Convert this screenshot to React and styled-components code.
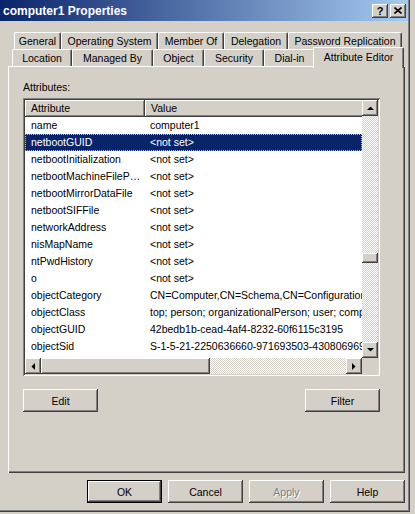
import React from "react"
import styled, { createGlobalStyle } from "styled-components"

const GlobalStyle = createGlobalStyle`
  * { box-sizing: border-box; }
  html, body { margin: 0; padding: 0; background: #d4d0c8; }
  body {
    font-family: "Liberation Sans", Arial, sans-serif;
    font-size: 10.5px;
    color: #000;
  }
`

const raised = `
  box-shadow: inset -1px -1px #404040, inset 1px 1px #fff, inset -2px -2px #808080, inset 2px 2px #d4d0c8;
`

const Window = styled.div`
  width: 410px;
  height: 512px;
  background: #d4d0c8;
  box-shadow: inset -1px -1px #404040, inset -2px -2px #808080;
  padding: 0 2px 2px 0;
  display: flex;
  flex-direction: column;
`

const TitleBar = styled.div`
  height: 21px;
  flex: none;
  background: linear-gradient(to right, #0a246a, #a6caf0);
  display: flex;
  align-items: center;
  padding: 0 2px 0 3px;
  color: #fff;
  font-weight: bold;
  font-size: 12px;
`

const Title = styled.span`
  flex: 1;
  white-space: nowrap;
`

const CaptionButton = styled.div`
  width: 16px;
  height: 14px;
  margin-left: 2px;
  background: #d4d0c8;
  ${raised}
  display: flex;
  align-items: center;
  justify-content: center;
  color: #000;
  font-size: 11px;
  font-weight: bold;
`

const Body = styled.div`
  flex: 1;
  padding: 11px 3px 0 8px;
  display: flex;
  flex-direction: column;
`

const TabStrip = styled.div`
  height: 34px;
  flex: none;
  position: relative;
  z-index: 1;
`

const TabRow = styled.div`
  display: flex;
  height: 17px;
  padding-left: ${p => p.$indent}px;
`

const Tab = styled.div`
  flex: none;
  width: ${p => (p.$active ? p.$w + 4 : p.$w)}px;
  height: ${p => (p.$active ? 21 : 17)}px;
  margin: ${p => (p.$active ? "-2px -2px 0" : "0")};
  background: #d4d0c8;
  border-top: 1px solid #fff;
  border-left: 1px solid #fff;
  border-right: 1px solid #404040;
  border-radius: 2px 2px 0 0;
  box-shadow: inset -1px 0 #808080;
  display: flex;
  align-items: center;
  justify-content: center;
  padding-bottom: ${p => (p.$active ? 3 : 1)}px;
  white-space: nowrap;
  position: relative;
  z-index: ${p => (p.$active ? 2 : 0)};
`

const Panel = styled.div`
  height: 407px;
  flex: none;
  background: #d4d0c8;
  box-shadow: inset 1px 1px #fff, inset -1px -1px #404040, inset -2px -2px #808080;
  padding: 15px 0 0 15px;
  display: flex;
  flex-direction: column;
`

const Label = styled.div`
  height: 13px;
  line-height: 13px;
`

const ListView = styled.div`
  width: 357px;
  height: 278px;
  margin-top: 4px;
  padding: 2px;
  background: #fff;
  box-shadow: inset 1px 1px #808080, inset -1px -1px #fff, inset 2px 2px #404040, inset -2px -2px #d4d0c8;
  display: grid;
  grid-template-columns: 337px 16px;
  grid-template-rows: 258px 16px;
`

const ListContent = styled.div`
  overflow: hidden;
  background: #fff;
`

const HeaderRow = styled.div`
  display: flex;
  height: 17px;
  background: #d4d0c8;
`

const HeaderCell = styled.div`
  flex: none;
  width: ${p => p.$w}px;
  padding-left: ${p => p.$pad}px;
  line-height: 16px;
  box-shadow: inset -1px -1px #404040, inset 1px 1px #fff, inset -2px -2px #808080;
  white-space: nowrap;
`

const Row = styled.div`
  display: flex;
  height: 17px;
  line-height: 17px;
  width: 100%;
  background: ${p => (p.$selected ? "#0a246a" : "transparent")};
  color: ${p => (p.$selected ? "#fff" : "#000")};
  outline: ${p => (p.$selected ? "1px dotted #c8c4a0" : "none")};
  outline-offset: -1px;
`

const NameCell = styled.div`
  flex: none;
  width: 120px;
  padding: 0 4px 0 6px;
  white-space: nowrap;
  overflow: hidden;
  text-overflow: ellipsis;
`

const ValueCell = styled.div`
  flex: none;
  padding-left: 5px;
  white-space: nowrap;
`

const track = `
  background-color: #fff;
  background-image: conic-gradient(#d4d0c8 25%, #fff 0 50%, #d4d0c8 0 75%, #fff 0);
  background-size: 2px 2px;
`

const VScroll = styled.div`
  display: flex;
  flex-direction: column;
`

const HScroll = styled.div`
  display: flex;
`

const ScrollButton = styled.div`
  flex: none;
  width: 16px;
  height: 16px;
  background: #d4d0c8;
  ${raised}
  display: flex;
  align-items: center;
  justify-content: center;
`

const Track = styled.div`
  flex: 1;
  display: flex;
  flex-direction: ${p => (p.$vertical ? "column" : "row")};
  ${track}
`

const Thumb = styled.div`
  flex: none;
  background: #d4d0c8;
  ${raised}
  width: ${p => (p.$vertical ? "16px" : `${p.$size}px`)};
  height: ${p => (p.$vertical ? `${p.$size}px` : "16px")};
  margin-top: ${p => (p.$vertical ? p.$offset : 0)}px;
  margin-left: ${p => (p.$vertical ? 0 : p.$offset)}px;
`

const Corner = styled.div`
  background: #d4d0c8;
`

const ActionRow = styled.div`
  width: 357px;
  margin-top: 13px;
  display: flex;
  justify-content: space-between;
`

const Button = styled.button`
  width: 75px;
  height: 23px;
  padding: 0;
  border: none;
  background: #d4d0c8;
  font-family: "Liberation Sans", Arial, sans-serif;
  font-size: 10.5px;
  color: ${p => (p.disabled ? "#808080" : "#000")};
  text-shadow: ${p => (p.disabled ? "1px 1px #fff" : "none")};
  box-shadow: ${p =>
    p.$default
      ? "inset 0 0 0 1px #000, inset -2px -2px #404040, inset 2px 2px #fff, inset -3px -3px #808080"
      : "inset -1px -1px #404040, inset 1px 1px #fff, inset -2px -2px #808080"};
`

const ButtonBar = styled.div`
  margin-top: 7px;
  display: flex;
  justify-content: flex-end;
  gap: 6px;
`

const Arrow = ({ dir }) => {
  const pts = {
    up: "0,4 7,4 3.5,0.5",
    down: "0,0 7,0 3.5,3.5",
    left: "4,0 4,7 0.5,3.5",
    right: "0,0 0,7 3.5,3.5",
  }[dir]
  const vertical = dir === "up" || dir === "down"
  return (
    <svg width={vertical ? 7 : 4} height={vertical ? 4 : 7} viewBox={vertical ? "0 0 7 4" : "0 0 4 7"}>
      <polygon points={pts} fill="#000" />
    </svg>
  )
}

const rows = [
  ["name", "computer1"],
  ["netbootGUID", "<not set>"],
  ["netbootInitialization", "<not set>"],
  ["netbootMachineFilePath", "<not set>"],
  ["netbootMirrorDataFile", "<not set>"],
  ["netbootSIFFile", "<not set>"],
  ["networkAddress", "<not set>"],
  ["nisMapName", "<not set>"],
  ["ntPwdHistory", "<not set>"],
  ["o", "<not set>"],
  ["objectCategory", "CN=Computer,CN=Schema,CN=Configuration,DC=contoso,DC=com"],
  ["objectClass", "top; person; organizationalPerson; user; computer"],
  ["objectGUID", "42bedb1b-cead-4af4-8232-60f6115c3195"],
  ["objectSid", "S-1-5-21-2250636660-971693503-4308069694-1104"],
  ["objectVersion", "<not set>"],
]

const backTabs = [
  ["General", 47],
  ["Operating System", 97],
  ["Member Of", 66],
  ["Delegation", 64],
  ["Password Replication", 114],
]

const frontTabs = [
  ["Location", 60],
  ["Managed By", 81],
  ["Object", 51],
  ["Security", 60],
  ["Dial-in", 51],
  ["Attribute Editor", 87],
]

export default function App() {
  const selected = 1
  return (
    <>
      <GlobalStyle />
      <Window>
        <TitleBar>
          <Title>computer1 Properties</Title>
          <CaptionButton>?</CaptionButton>
          <CaptionButton>
            <svg width="8" height="7" viewBox="0 0 8 7">
              <path d="M0.5 0.5 L7.5 6.5 M7.5 0.5 L0.5 6.5" stroke="#000" strokeWidth="1.6" />
            </svg>
          </CaptionButton>
        </TitleBar>
        <Body>
          <TabStrip>
            <TabRow $indent={6}>
              {backTabs.map(([label, w]) => (
                <Tab key={label} $w={w}>{label}</Tab>
              ))}
            </TabRow>
            <TabRow $indent={4}>
              {frontTabs.map(([label, w]) => (
                <Tab key={label} $w={w} $active={label === "Attribute Editor"}>{label}</Tab>
              ))}
            </TabRow>
          </TabStrip>
          <Panel>
            <Label>Attributes:</Label>
            <ListView>
              <ListContent>
                <HeaderRow>
                  <HeaderCell $w={120} $pad={6}>Attribute</HeaderCell>
                  <HeaderCell $w={400} $pad={6}>Value</HeaderCell>
                </HeaderRow>
                {rows.map(([name, value], i) => (
                  <Row key={name} $selected={i === selected}>
                    <NameCell>{name}</NameCell>
                    <ValueCell>{value}</ValueCell>
                  </Row>
                ))}
              </ListContent>
              <VScroll>
                <ScrollButton><Arrow dir="up" /></ScrollButton>
                <Track $vertical>
                  <Thumb $vertical $size={10} $offset={137} />
                </Track>
                <ScrollButton><Arrow dir="down" /></ScrollButton>
              </VScroll>
              <HScroll>
                <ScrollButton><Arrow dir="left" /></ScrollButton>
                <Track>
                  <Thumb $size={169} $offset={0} />
                </Track>
                <ScrollButton><Arrow dir="right" /></ScrollButton>
              </HScroll>
              <Corner />
            </ListView>
            <ActionRow>
              <Button>Edit</Button>
              <Button>Filter</Button>
            </ActionRow>
          </Panel>
          <ButtonBar>
            <Button $default>OK</Button>
            <Button>Cancel</Button>
            <Button disabled>Apply</Button>
            <Button>Help</Button>
          </ButtonBar>
        </Body>
      </Window>
    </>
  )
}
